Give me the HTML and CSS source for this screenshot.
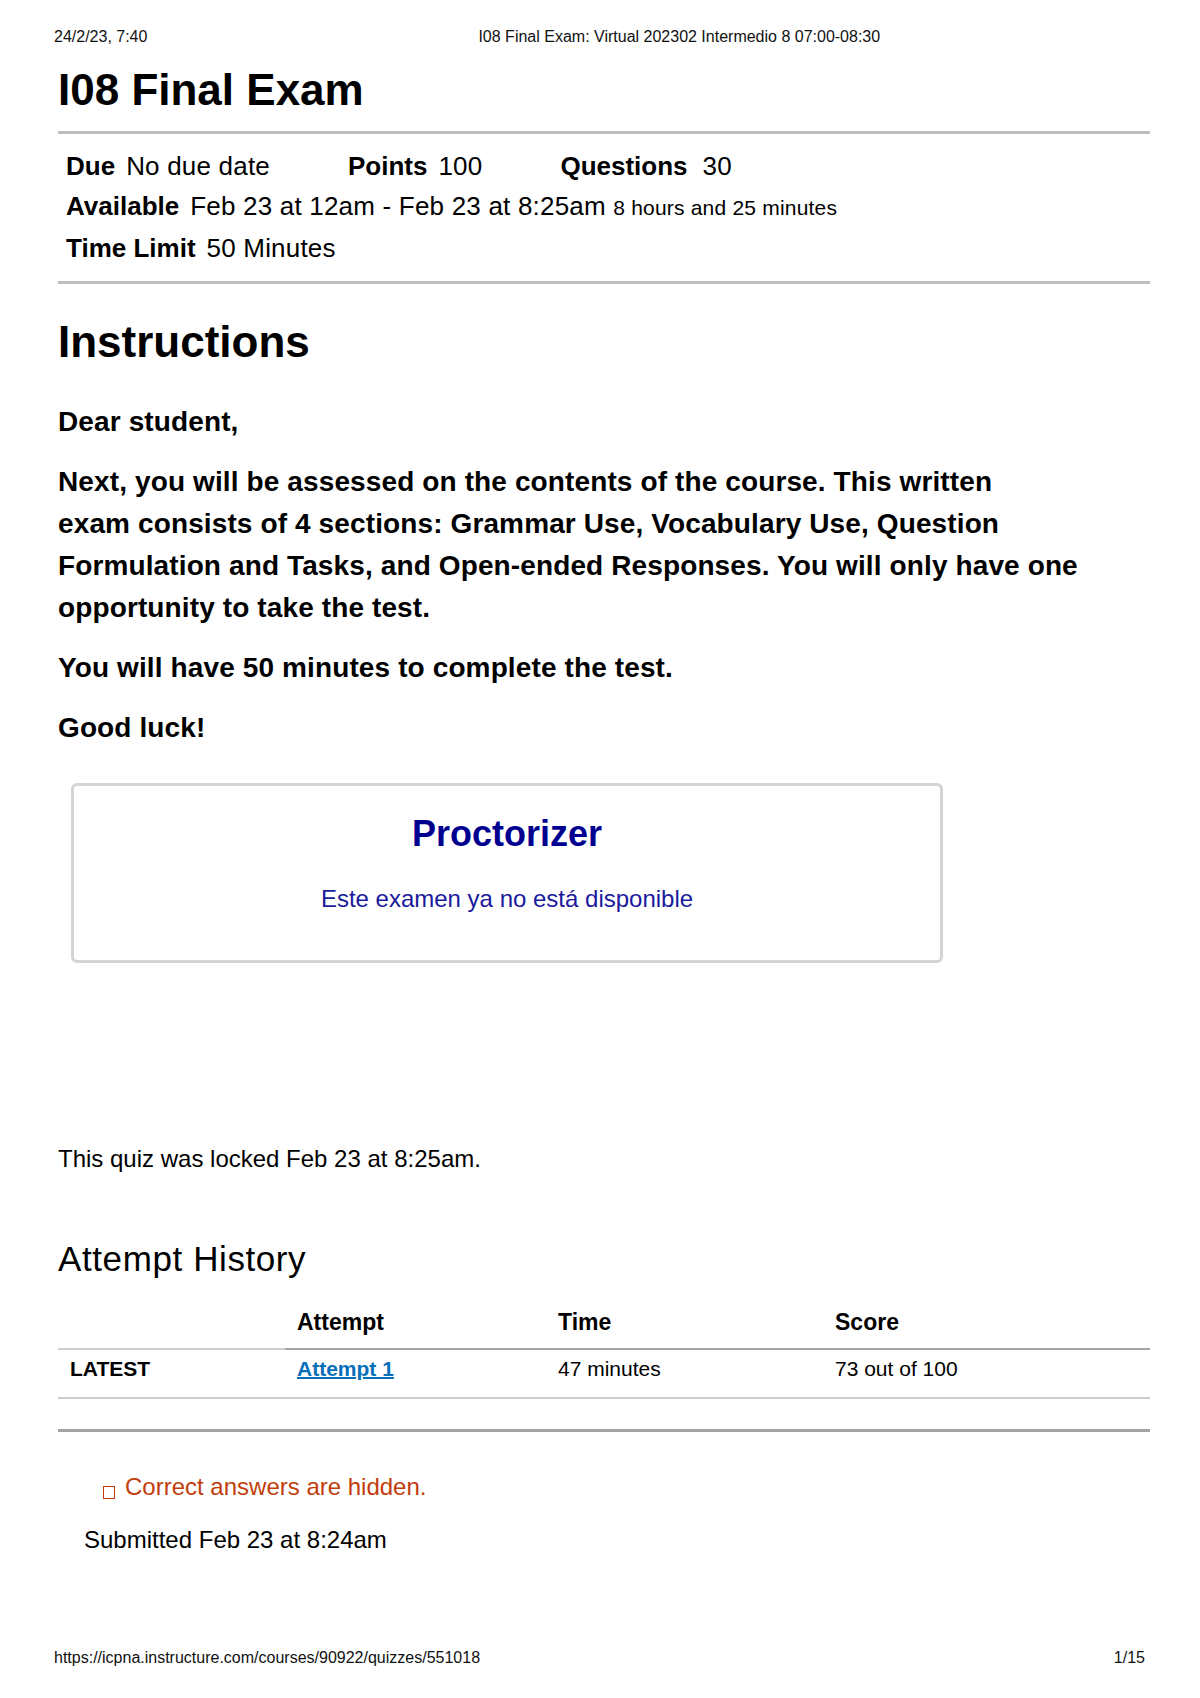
FILE: index.html
```html
<!DOCTYPE html>
<html lang="en">

<head>
  <meta charset="UTF-8">
  <title>I08 Final Exam: Virtual 202302 Intermedio 8 07:00-08:30</title>
  <meta name="viewport" content="width=device-width, initial-scale=1.0">
  <link rel="stylesheet" href="styles.css">
</head>

<body>
  <header class="print-header">
    <span class="print-date">24/2/23, 7:40</span>
    <span class="print-title">I08 Final Exam: Virtual 202302 Intermedio 8 07:00-08:30</span>
  </header>

  <main class="quiz">
    <div class="quiz-header">
      <h1 class="quiz-title">I08 Final Exam</h1>
    </div>

    <ul class="quiz-meta">
      <li class="meta-row">
        <span class="meta-item"><span class="meta-label">Due</span><span>No due date</span></span>
        <span class="meta-item"><span class="meta-label">Points</span><span>100</span></span>
        <span class="meta-item"><span class="meta-label wide">Questions</span><span>30</span></span>
      </li>
      <li class="meta-row">
        <span class="meta-item"><span class="meta-label">Available</span><span>Feb 23 at 12am - Feb 23 at 8:25am <span class="meta-note">8 hours and 25 minutes</span></span></span>
      </li>
      <li class="meta-row">
        <span class="meta-item"><span class="meta-label">Time Limit</span><span>50 Minutes</span></span>
      </li>
    </ul>

    <section class="instructions">
      <h2 class="section-title">Instructions</h2>
      <div class="description">
        <p>Dear student,</p>
        <p>Next, you will be assessed on the contents of the course. This written<br>exam consists of 4 sections: Grammar Use, Vocabulary Use, Question Formulation and Tasks, and Open-ended Responses. You will only have one opportunity to take the test.</p>
        <p>You will have 50 minutes to complete the test.</p>
        <p>Good luck!</p>
      </div>

      <div class="proctor-box">
        <div class="proctor-title">Proctorizer</div>
        <div class="proctor-text">Este examen ya no está disponible</div>
      </div>
    </section>

    <p class="locked">This quiz was locked Feb 23 at 8:25am.</p>

    <section class="history">
      <h2 class="history-title">Attempt History</h2>
      <table class="history-table">
        <colgroup>
          <col class="col-status">
          <col class="col-attempt">
          <col class="col-time">
          <col>
        </colgroup>
        <thead>
          <tr>
            <th></th>
            <th>Attempt</th>
            <th>Time</th>
            <th>Score</th>
          </tr>
        </thead>
        <tbody>
          <tr>
            <td class="status">LATEST</td>
            <td><a href="#" class="attempt-link">Attempt 1</a></td>
            <td>47 minutes</td>
            <td>73 out of 100</td>
          </tr>
        </tbody>
      </table>
      <div class="history-end"></div>
    </section>

    <p class="feedback"><span class="tofu"></span>Correct answers are hidden.</p>
    <p class="submitted">Submitted Feb 23 at 8:24am</p>
  </main>

  <footer class="print-footer">
    <span>https://icpna.instructure.com/courses/90922/quizzes/551018</span>
    <span>1/15</span>
  </footer>
</body>

</html>
```

FILE: styles.css
```css
* {
  margin: 0;
  padding: 0;
  box-sizing: border-box;
}

body {
  width: 1200px;
  font-family: "Liberation Sans", Arial, sans-serif;
  color: #000;
  background: #fff;
}

.print-header {
  display: flex;
  padding: 28px 0 0 54px;
  font-size: 16px;
  line-height: 18px;
  color: #111;
}

.print-title {
  margin-left: 331px;
}

.quiz {
  padding: 0 50px 0 58px;
}

.quiz-header {
  padding: 19px 0 16px;
  border-bottom: 3px solid #bdbdbd;
}

.quiz-title {
  font-size: 44px;
  line-height: 50px;
  font-weight: bold;
}

.quiz-meta {
  list-style: none;
  padding: 12px 0 13px 8px;
  border-bottom: 3px solid #bdbdbd;
  font-size: 26px;
  line-height: 40px;
  letter-spacing: 0.2px;
}

.meta-row {
  display: flex;
  gap: 78px;
}

.meta-label {
  font-weight: bold;
  letter-spacing: 0;
  margin-right: 11px;
}

.meta-label.wide {
  margin-right: 15px;
}

.meta-note {
  font-size: 21px;
}

.section-title {
  margin-top: 33px;
  font-size: 44px;
  line-height: 50px;
  font-weight: bold;
}

.description {
  margin-top: 34px;
  font-size: 28px;
  line-height: 42px;
  font-weight: bold;
  letter-spacing: 0.12px;
}

.description p {
  margin-bottom: 18px;
}

.description p:last-child {
  margin-bottom: 0;
}

.proctor-box {
  width: 872px;
  margin: 34px 0 0 13px;
  padding: 28px 0 47px;
  border: 3px solid #d4d4d4;
  border-radius: 6px;
  text-align: center;
  color: #000090;
}

.proctor-title {
  font-size: 36px;
  line-height: 40px;
  font-weight: bold;
}

.proctor-text {
  margin-top: 31px;
  font-size: 24px;
  line-height: 28px;
  color: #1a1a9c;
}

.locked {
  margin-top: 182px;
  font-size: 24px;
  line-height: 28px;
}

.history-title {
  margin-top: 67px;
  font-size: 35px;
  line-height: 38px;
  font-weight: normal;
  letter-spacing: 0.6px;
}

.history-table {
  width: 100%;
  margin-top: 18px;
  border-collapse: collapse;
}

.col-status {
  width: 227px;
}

.col-attempt {
  width: 261px;
}

.col-time {
  width: 277px;
}

.history-table th {
  padding: 13px 12px;
  text-align: left;
  font-size: 23px;
  line-height: 26px;
  border-bottom: 2px solid #a0a5aa;
}

.history-table th:first-child {
  border-bottom-color: #c9ced2;
}

.history-table td {
  padding: 6px 12px 15px;
  font-size: 21px;
  line-height: 26px;
  border-bottom: 2px solid #c9ced2;
}

.history-table .status {
  font-weight: bold;
}

.attempt-link {
  color: #0770b8;
  font-weight: bold;
  text-decoration: underline;
  text-decoration-thickness: 2px;
}

.history-end {
  margin-top: 30px;
  border-top: 3px solid #a3a3a3;
}

.feedback {
  margin: 41px 0 0 45px;
  font-size: 24px;
  line-height: 28px;
  color: #c23d0b;
}

.tofu {
  display: inline-block;
  width: 12px;
  height: 13px;
  margin-right: 10px;
  border: 1.5px solid currentColor;
  vertical-align: -4px;
}

.submitted {
  margin: 25px 0 0 26px;
  font-size: 24px;
  line-height: 28px;
}

.print-footer {
  display: flex;
  justify-content: space-between;
  margin-top: 95px;
  padding: 0 55px 0 54px;
  font-size: 16px;
  line-height: 18px;
  color: #111;
}
```
